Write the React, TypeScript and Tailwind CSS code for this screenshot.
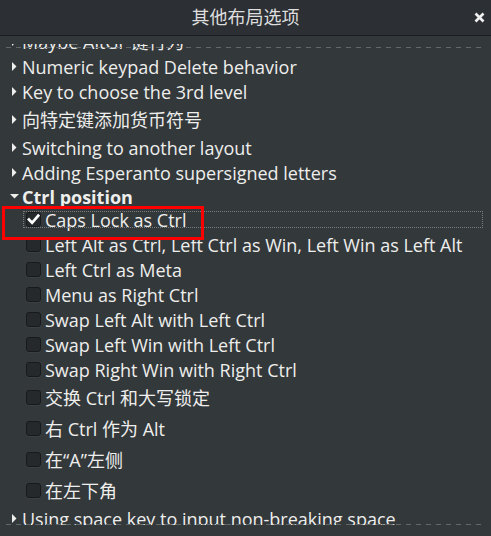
import React from "react";

const FONT = { fontFamily: '"Open Sans", "Noto Sans CJK SC", sans-serif' };

function ArrowRight() {
  return (
    <svg width="5" height="9" viewBox="0 0 5 9" className="shrink-0">
      <polygon points="0,0 4.5,4.5 0,9" fill="#eeeeec" />
    </svg>
  );
}

function ArrowDown() {
  return (
    <svg width="9" height="5" viewBox="0 0 9 5" className="shrink-0">
      <polygon points="0,0 9,0 4.5,4.5" fill="#eeeeec" />
    </svg>
  );
}

function Expander({ label, open = false, tall = false, bold = false }: { label: string; open?: boolean; tall?: boolean; bold?: boolean }) {
  return (
    <div className={`flex items-center ${tall ? "h-[31px]" : open ? "h-[22px] pt-[1px]" : "h-[25px]"}`}>
      {open ? (
        <div className="w-[22px] pl-[10px] flex items-center">
          <ArrowDown />
        </div>
      ) : (
        <div className="w-[22px] pl-[12px] flex items-center">
          <ArrowRight />
        </div>
      )}
      <span className={`text-[18px] leading-[24px] text-[#eeeeec] whitespace-nowrap ${bold ? "font-bold" : ""}`}>{label}</span>
    </div>
  );
}

function CheckBox({ checked }: { checked: boolean }) {
  return (
    <div className="w-[15px] h-[15px] rounded-[3px] bg-[#26292b] border border-[#17191a] shadow-[0_1px_0_0_#3b4043] flex items-center justify-center shrink-0">
      {checked && (
        <svg width="13" height="13" viewBox="0 0 13 13">
          <path d="M2 6.6 L5.1 9.8 L11.2 2.8" stroke="#ffffff" strokeWidth="2.8" fill="none" strokeLinecap="square" />
        </svg>
      )}
    </div>
  );
}

function CheckRow({ label, checked = false, tall = false, focus = false }: { label: string; checked?: boolean; tall?: boolean; focus?: boolean }) {
  return (
    <div className={`relative flex items-center pl-[26px] ${tall ? "h-[31px]" : "h-[25px]"}`}>
      {focus && <div className="absolute left-[23px] right-[8px] top-[4px] bottom-[4px] border border-dotted border-[#7a7e80]" />}
      <CheckBox checked={checked} />
      <span className="ml-[4px] text-[18px] leading-[24px] text-[#eeeeec] whitespace-nowrap">{label}</span>
    </div>
  );
}

export default function App() {
  return (
    <div className="w-[491px] h-[536px] bg-[#33383b] flex flex-col overflow-hidden relative" style={FONT}>
      <div className="h-[36px] shrink-0 bg-[#2c2f33] border-b border-[#1a1c1e] flex items-center justify-center relative">
        <span className="text-[18px] text-[#dedede]">其他布局选项</span>
        <svg className="absolute left-[474px] top-[12px]" width="11" height="11" viewBox="0 0 11 11">
          <path d="M1.5 1.5 L9.5 9.5 M9.5 1.5 L1.5 9.5" stroke="#f0f0f0" strokeWidth="2.6" />
        </svg>
      </div>
      <div className="pt-[8px] shrink-0">
        <div className="relative h-[481px] overflow-hidden">
          <div className="-mt-[15px] flex flex-col">
            <Expander label="Maybe AltGr 键行为" />
            <Expander label="Numeric keypad Delete behavior" />
            <Expander label="Key to choose the 3rd level" />
            <Expander label="向特定键添加货币符号" tall />
            <Expander label="Switching to another layout" />
            <Expander label="Adding Esperanto supersigned letters" />
            <Expander label="Ctrl position" open bold />
            <CheckRow label="Caps Lock as Ctrl" checked focus />
            <CheckRow label="Left Alt as Ctrl, Left Ctrl as Win, Left Win as Left Alt" />
            <CheckRow label="Left Ctrl as Meta" />
            <CheckRow label="Menu as Right Ctrl" />
            <CheckRow label="Swap Left Alt with Left Ctrl" />
            <CheckRow label="Swap Left Win with Left Ctrl" />
            <CheckRow label="Swap Right Win with Right Ctrl" />
            <CheckRow label="交换 Ctrl 和大写锁定" tall />
            <CheckRow label="右 Ctrl 作为 Alt" tall />
            <CheckRow label="在“A”左侧" tall />
            <CheckRow label="在左下角" tall />
            <Expander label="Using space key to input non-breaking space" />
          </div>
          <div className="absolute left-[6px] w-[480px] top-[3px] h-px bg-[repeating-linear-gradient(90deg,#62676a_0px,#62676a_5px,transparent_5px,transparent_10px)]" />
          <div className="absolute left-[6px] w-[480px] top-[480px] h-px bg-[repeating-linear-gradient(90deg,#62676a_0px,#62676a_5px,transparent_5px,transparent_10px)]" />
        </div>
      </div>
      <div className="absolute left-[2px] top-[206px] w-[202px] h-[34px] border-[3px] border-[#ff0000]" />
    </div>
  );
}
